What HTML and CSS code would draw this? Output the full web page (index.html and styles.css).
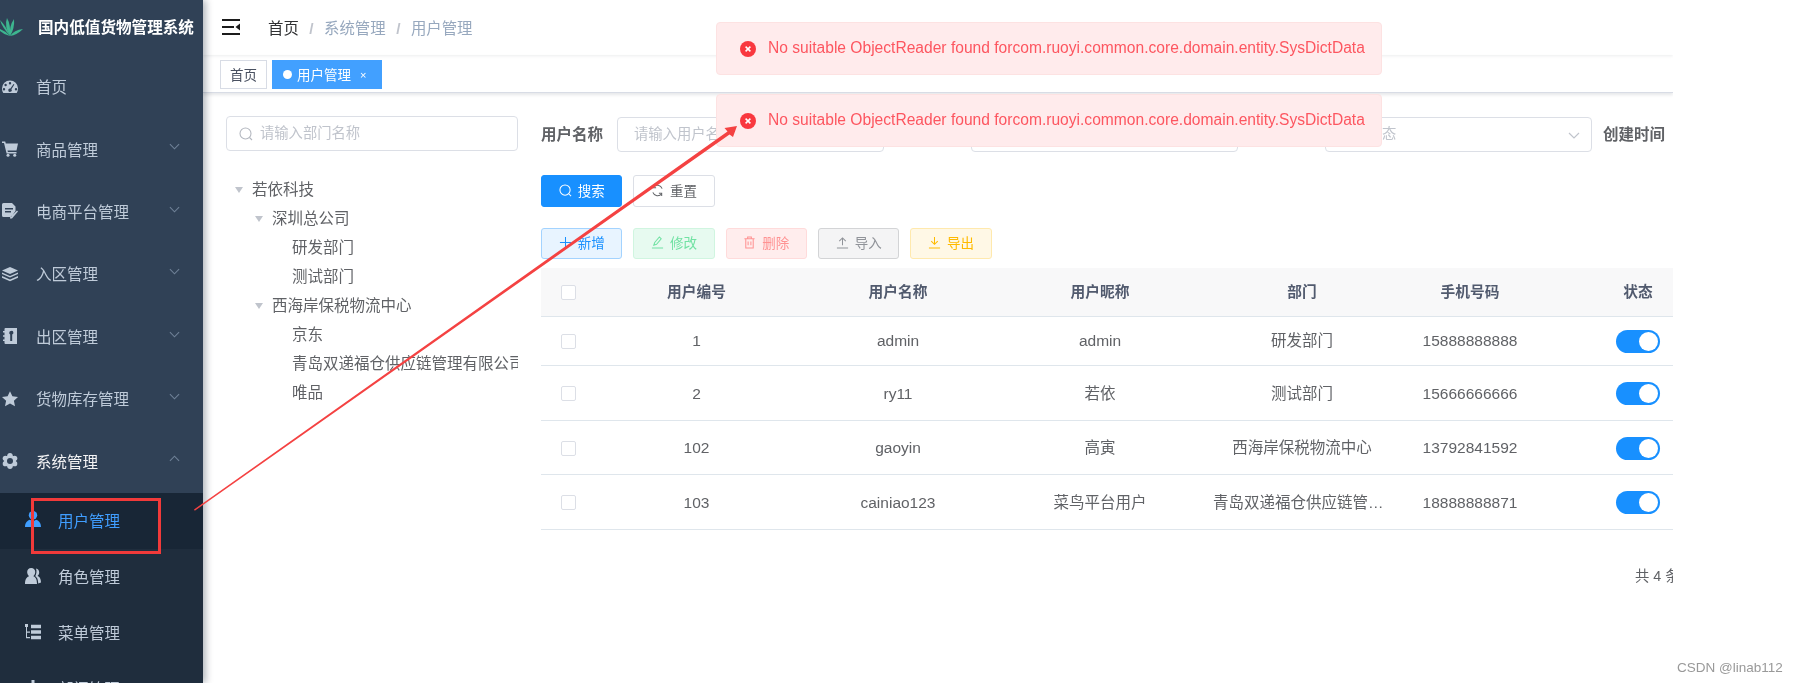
FILE: index.html
```html
<!DOCTYPE html>
<html lang="zh-CN">
<head>
<meta charset="utf-8">
<title>用户管理</title>
<link rel="stylesheet" href="styles.css">
</head>
<body>
<div class="app">
  <aside class="sidebar">
    <div class="logo">
      <svg class="logo-mark" viewBox="0 0 23 18"><path d="M10 18Q2 9 0 2 6 8 10 18z"/><path d="M10 18Q4 8 7 0 11 7 10 18z"/><path d="M10 18Q9 8 14 1 15 10 10 18z"/><path d="M10 18Q14 12 23 11 17 17 10 18z"/><path d="M10 18Q3 17-3 10 5 12 10 18z"/></svg>
      <span class="logo-title">国内低值货物管理系统</span>
    </div>
    <nav class="menu">
      <div class="menu-item">
        <svg class="ico" viewBox="0 0 16 16"><path fill-rule="evenodd" d="M8 1.500A8 8 0 0 0 0 9.500c0 1.700.5 3.200 1.300 4.500h13.400A8 8 0 0 0 16 9.500a8 8 0 0 0-8-8zM8 3a1.200 1.200 0 1 1 0 2.400A1.200 1.200 0 0 1 8 3zM3.600 4.800a1.200 1.200 0 1 1 0 2.400 1.200 1.200 0 0 1 0-2.400zM2 9a1.200 1.200 0 1 1 0 2.400A1.200 1.200 0 0 1 2 9zm12 0a1.200 1.200 0 1 1 0 2.400A1.200 1.200 0 0 1 14 9zM11.500 5l.9.5L9.400 10.200a1.700 1.700 0 1 1-1-.7z"/></svg>
        <span class="menu-label">首页</span>
      </div>
      <div class="menu-item">
        <svg class="ico" viewBox="0 0 16 16"><path d="M0 .5h3.200l.6 2H16l-1.500 7H5.500l.4 1.500h8.600v1.500H4.600L2 2H0z"/><circle cx="6" cy="14.300" r="1.500"/><circle cx="12.700" cy="14.300" r="1.500"/></svg>
        <span class="menu-label">商品管理</span>
        <svg class="chev" viewBox="0 0 12 7"><path d="M1 1l5 5 5-5"/></svg>
      </div>
      <div class="menu-item">
        <svg class="ico" viewBox="0 0 16 16"><path fill-rule="evenodd" d="M1.500 0H10l3.500 3.500V8L9 14H1.500A1.500 1.500 0 0 1 0 12.500v-11A1.500 1.500 0 0 1 1.500 0zM3 5v1.400h8V5zm0 3v1.400h6V8zm5 6.500L15 7.500l1 1-6 7H8z"/></svg>
        <span class="menu-label">电商平台管理</span>
        <svg class="chev" viewBox="0 0 12 7"><path d="M1 1l5 5 5-5"/></svg>
      </div>
      <div class="menu-item">
        <svg class="ico" viewBox="0 0 16 16"><path d="M8 1l8 3.500L8 8 0 4.500z"/><path d="M0 6.500L8 10l8-3.500V8l-8 3.500L0 8z"/><path d="M0 10l8 3.500 8-3.500v1.700L8 15.200 0 11.700z"/></svg>
        <span class="menu-label">入区管理</span>
        <svg class="chev" viewBox="0 0 12 7"><path d="M1 1l5 5 5-5"/></svg>
      </div>
      <div class="menu-item">
        <svg class="ico" viewBox="0 0 16 16"><path fill-rule="evenodd" d="M3.500 0H15v16H3.500a1 1 0 0 1-1-1v-2H1v-1.500h1.500V8.700H1V7.300h1.500V4.500H1V3h1.500V1a1 1 0 0 1 1-1zM9 3a1.800 1.800 0 0 0-.8 3.400V13h2V6.400A1.800 1.800 0 0 0 9 3z"/></svg>
        <span class="menu-label">出区管理</span>
        <svg class="chev" viewBox="0 0 12 7"><path d="M1 1l5 5 5-5"/></svg>
      </div>
      <div class="menu-item">
        <svg class="ico" viewBox="0 0 16 16"><path d="M8 .300l2.400 5 5.600.7-4.100 3.800 1.100 5.500L8 12.600l-5 2.700 1.100-5.500L0 6l5.600-.7z"/></svg>
        <span class="menu-label">货物库存管理</span>
        <svg class="chev" viewBox="0 0 12 7"><path d="M1 1l5 5 5-5"/></svg>
      </div>
      <div class="menu-item is-open">
        <svg class="ico" viewBox="0 0 16 16"><circle cx="8" cy="8" r="6"/><circle cx="8" cy="2.700" r="2.700"/><circle cx="8" cy="13.300" r="2.700"/><circle cx="3.400" cy="5.350" r="2.700"/><circle cx="12.600" cy="5.350" r="2.700"/><circle cx="3.400" cy="10.650" r="2.700"/><circle cx="12.600" cy="10.650" r="2.700"/><circle class="gear-ring" cx="8" cy="8" r="3"/></svg>
        <span class="menu-label">系统管理</span>
        <svg class="chev" viewBox="0 0 12 7"><path d="M1 6l5-5 5 5"/></svg>
      </div>
      <div class="submenu">
        <div class="sub-item is-active">
          <svg class="ico" viewBox="0 0 16 16"><circle cx="8" cy="4.300" r="4.200"/><path d="M0 16c0-4.500 2.500-6.500 5-7.200l3 1.700 3-1.700c2.500.7 5 2.700 5 7.200z"/></svg>
          <span>用户管理</span>
        </div>
        <div class="sub-item">
          <svg class="ico" viewBox="0 0 16 16"><path d="M6.200 0a4 4 0 0 1 4 4.500c-.2 1.800-1 3-1.900 3.700 2.200.7 3.700 2.500 3.700 7.800H0c0-5.300 1.900-7.100 4.100-7.800C3.200 7.500 2.400 6.300 2.200 4.500A4 4 0 0 1 6.200 0z"/><path d="M11 .5c2 .3 3.200 1.900 3.200 3.700 0 1.700-.7 3-1.700 3.700 2 .8 3.500 2.500 3.500 6.600l-2.800 1c0-5-1.700-6.400-3-7.300 1.200-1.700 1.800-5.300.8-7.700z"/></svg>
          <span>角色管理</span>
        </div>
        <div class="sub-item">
          <svg class="ico" viewBox="0 0 16 16"><path d="M0 0h3v3H2v4.500h3v1.300H2V13h3v1.300H1V3H0z"/><path d="M6 .800h10v3.400H6zM6 6.300h10v3.400H6zM6 11.800h10v3.400H6z"/></svg>
          <span>菜单管理</span>
        </div>
        <div class="sub-item">
          <svg class="ico" viewBox="0 0 16 16"><path d="M6.500 0h3v4h-3zM2 7h12v3H2z"/></svg>
          <span>部门管理</span>
        </div>
      </div>
    </nav>
  </aside>

  <main class="main">
    <header class="navbar">
      <svg class="hamburger" viewBox="0 0 18 16"><path d="M0 0h18v2H0zM0 7h12v2H0zM0 14h18v2H0zM18 4.500v7L13.500 8z"/></svg>
      <div class="crumbs">
        <span class="crumb-home">首页</span><span class="crumb-sep">/</span><span>系统管理</span><span class="crumb-sep">/</span><span>用户管理</span>
      </div>
    </header>
    <div class="tags">
      <span class="tag"><span class="tag-text">首页</span></span>
      <span class="tag tag-active"><i class="tag-dot"></i><span class="tag-text">用户管理</span><b class="tag-x">×</b></span>
    </div>

    <div class="content">
      <section class="tree-col">
        <div class="field tree-search">
          <svg class="search-ico" viewBox="0 0 14 14"><circle cx="6.500" cy="6.500" r="5.500"/><path d="M10.500 10.500L13 13"/></svg>
          <span class="ph">请输入部门名称</span>
        </div>
        <div class="tree">
          <div class="node"><i class="caret"></i>若依科技</div>
          <div class="node lv1"><i class="caret"></i>深圳总公司</div>
          <div class="node lv2">研发部门</div>
          <div class="node lv2">测试部门</div>
          <div class="node lv1"><i class="caret"></i>西海岸保税物流中心</div>
          <div class="node lv2">京东</div>
          <div class="node lv2">青岛双递福仓供应链管理有限公司</div>
          <div class="node lv2">唯品</div>
        </div>
      </section>

      <section class="data-col">
        <form class="query">
          <label class="q-label">用户名称</label>
          <div class="field q-input"><span class="ph">请输入用户名称</span></div>
          <label class="q-label">手机号码</label>
          <div class="field q-input"><span class="ph">请输入手机号码</span></div>
          <label class="q-label">状态</label>
          <div class="field q-input q-select"><span class="ph">用户状态</span>
            <svg class="select-chev" viewBox="0 0 12 7"><path d="M1 1l5 5 5-5"/></svg>
          </div>
          <label class="q-label q-last">创建时间</label>
        </form>

        <div class="btn-row">
          <span class="btn btn-primary"><svg class="b-ico" viewBox="0 0 14 14"><circle cx="6.500" cy="6.500" r="5.500"/><path d="M10.500 10.500L13 13"/></svg>搜索</span>
          <span class="btn btn-plain"><svg class="b-ico" viewBox="0 0 14 14"><path d="M12 5A5.500 5.500 0 0 0 2.500 3.500M2 9a5.500 5.500 0 0 0 9.500 1.500"/><path d="M2.500 1v3h3M11.500 13v-3h-3"/></svg>重置</span>
        </div>

        <div class="btn-row tools">
          <span class="btn t-blue"><svg class="b-ico" viewBox="0 0 14 14"><path d="M7 1v12M1 7h12"/></svg>新增</span>
          <span class="btn t-green"><svg class="b-ico" viewBox="0 0 14 14"><path d="M1 13h12M3 10l1-3 5-6 2 2-5 6z"/></svg>修改</span>
          <span class="btn t-red"><svg class="b-ico" viewBox="0 0 14 14"><path d="M1.500 3h11M3 3v10h8V3M5 3V1h4v2M5.500 6v4M8.500 6v4"/></svg>删除</span>
          <span class="btn t-gray"><svg class="b-ico" viewBox="0 0 14 14"><path d="M1 13h12M7 10V2M3.500 5.500L7 2l3.500 3.500"/></svg>导入</span>
          <span class="btn t-yellow"><svg class="b-ico" viewBox="0 0 14 14"><path d="M1 13h12M7 1v8M3.500 5.500L7 9l3.500-3.500"/></svg>导出</span>
        </div>

        <div class="table">
          <div class="tr th">
            <span class="cell"><i class="check"></i></span><span class="cell">用户编号</span><span class="cell">用户名称</span><span class="cell">用户昵称</span><span class="cell">部门</span><span class="cell">手机号码</span><span class="cell">状态</span>
          </div>
          <div class="tr r-short">
            <span class="cell"><i class="check"></i></span><span class="cell">1</span><span class="cell">admin</span><span class="cell">admin</span><span class="cell">研发部门</span><span class="cell">15888888888</span><span class="cell"><i class="switch"></i></span>
          </div>
          <div class="tr r-tall">
            <span class="cell"><i class="check"></i></span><span class="cell">2</span><span class="cell">ry11</span><span class="cell">若依</span><span class="cell">测试部门</span><span class="cell">15666666666</span><span class="cell"><i class="switch"></i></span>
          </div>
          <div class="tr r-tall">
            <span class="cell"><i class="check"></i></span><span class="cell">102</span><span class="cell">gaoyin</span><span class="cell">高寅</span><span class="cell">西海岸保税物流中心</span><span class="cell">13792841592</span><span class="cell"><i class="switch"></i></span>
          </div>
          <div class="tr r-tall">
            <span class="cell"><i class="check"></i></span><span class="cell">103</span><span class="cell">cainiao123</span><span class="cell">菜鸟平台用户</span><span class="cell">青岛双递福仓供应链管理有限公司</span><span class="cell">18888888871</span><span class="cell"><i class="switch"></i></span>
          </div>
        </div>
        <div class="pager">共 4 条</div>
      </section>
    </div>
  </main>
</div>

<div class="msg msg-one">
  <svg class="msg-ico" viewBox="0 0 16 16"><circle cx="8" cy="8" r="8"/><path d="M5.600 5.600l4.800 4.800M10.400 5.600l-4.800 4.800"/></svg>
  <span class="msg-text">No suitable ObjectReader found forcom.ruoyi.common.core.domain.entity.SysDictData</span>
</div>
<div class="msg msg-two">
  <svg class="msg-ico" viewBox="0 0 16 16"><circle cx="8" cy="8" r="8"/><path d="M5.600 5.600l4.800 4.800M10.400 5.600l-4.800 4.800"/></svg>
  <span class="msg-text">No suitable ObjectReader found forcom.ruoyi.common.core.domain.entity.SysDictData</span>
</div>

<svg class="annot" viewBox="0 0 1797 683">
  <path class="annot-arrow" d="M194 509.500L194.800 510.700 729.500 134.500 733 137 737 126 724.500 128 727.500 131.500z"/>
</svg>
<div class="annot-box"></div>
<div class="watermark">CSDN @linab112</div>
</body>
</html>
```

FILE: styles.css
```css
* { box-sizing: border-box; }
html, body { margin: 0; height: 683px; overflow: hidden; background: #fff; }
body {
  font-family: "Liberation Sans", "Noto Sans CJK SC", sans-serif;
  font-size: 15.5px;
  color: #606266;
  filter: blur(.4px);
}
.app { display: flex; width: 1673px; height: 683px; }

/* sidebar */
.sidebar {
  width: 203px;
  flex: none;
  height: 683px;
  overflow: hidden;
  background: #304156;
  color: #bfcbd9;
  box-shadow: 3px 0 7px rgba(0, 21, 41, .3);
  position: relative;
  z-index: 2;
}
.logo { height: 56px; display: flex; align-items: center; padding-bottom: 3px; }
.logo-mark { width: 23px; height: 18px; margin-right: 15px; fill: #3db58f; flex: none; overflow: visible; }
.logo-title { color: #fff; font-weight: 700; font-size: 15.6px; white-space: nowrap; margin-top: -1px; }
.menu-item {
  height: 62.4px;
  display: flex;
  align-items: center;
  padding-left: 2px;
  position: relative;
}
.ico { width: 16px; height: 16px; fill: #bfcbd9; flex: none; margin-top: -1px; }
.gear-ring { fill: #304156; }
.menu-label { margin: -2px 0 0 18px; }
.chev {
  position: absolute;
  left: 169px;
  top: 25px;
  width: 11px;
  height: 7px;
  fill: none;
  stroke: #6f8197;
  stroke-width: 1.200;
}
.is-open { color: #f4f4f5; }
.submenu { background: #1f2d3d; }
.sub-item {
  height: 56.2px;
  display: flex;
  align-items: center;
  gap: 17px;
  padding-left: 25px;
  padding-bottom: 2px;
}
.is-active { background: #182636; color: #409eff; }
.is-active .ico { fill: #409eff; }

/* main */
.main { width: 1470px; flex: none; overflow: hidden; }
.navbar {
  height: 55px;
  display: flex;
  align-items: center;
  padding-left: 19px;
  box-shadow: 0 1px 3px rgba(0, 21, 41, .08);
  position: relative;
}
.hamburger { width: 18px; height: 16px; fill: #1c1c1c; margin-top: -1px; }
.crumbs { margin: -2px 0 0 28px; color: #97a8be; font-size: 15.4px; white-space: nowrap; }
.crumb-home { color: #303133; }
.crumb-sep { color: #c0c4cc; margin: 0 10.5px; font-weight: 700; }
.tags {
  height: 38px;
  padding: 5px 0 0 17px;
  display: flex;
  gap: 5px;
  border-bottom: 1px solid #d8dce5;
  box-shadow: 0 2px 3px rgba(0, 21, 41, .1);
}
.tag {
  height: 29px;
  width: 47px;
  display: flex;
  align-items: center;
  justify-content: center;
  border: 1px solid #d8dce5;
  font-size: 13.5px;
  color: #495060;
}
.tag-text { margin-top: -2px; }
.tag-active {
  width: 110px;
  justify-content: flex-start;
  padding-left: 10px;
  background: #42a0ff;
  border-color: #42a0ff;
  color: #fff;
}
.tag-dot { width: 9px; height: 9px; border-radius: 50%; background: #fff; margin-right: 5px; }
.tag-x { font-weight: 400; font-size: 11px; margin-left: 9px; }

.content { display: flex; gap: 23px; padding: 23px 0 0 23px; }
.tree-col { width: 292px; flex: none; overflow: hidden; }
.field {
  height: 35px;
  display: flex;
  align-items: center;
  border: 1px solid #dcdfe6;
  border-radius: 4px;
  background: #fff;
  white-space: nowrap;
  overflow: hidden;
}
.ph { color: #c0c4cc; font-size: 14.3px; margin-top: -4px; }
.tree-search { padding-left: 12px; }
.search-ico { width: 14px; height: 14px; margin-right: 7px; fill: none; stroke: #b4b8c0; stroke-width: 1.100; }
.tree { margin-top: 24px; }
.node { height: 29px; line-height: 28px; white-space: nowrap; padding-left: 9px; display: flex; align-items: center; }
.lv1 { padding-left: 29px; }
.lv2 { padding-left: 66px; }
.caret {
  width: 0; height: 0;
  margin-right: 9px;
  border-left: 4.5px solid transparent;
  border-right: 4.5px solid transparent;
  border-top: 6px solid #c0c4cc;
}

.data-col { width: 1132px; flex: none; overflow: hidden; }
.query { display: flex; align-items: center; margin-top: 1px; }
.q-label { width: 76px; flex: none; font-weight: 700; font-size: 15.5px; white-space: nowrap; margin-top: -4px; }
.q-input { width: 266.5px; margin-right: 11.5px; flex: none; padding-left: 16px; position: relative; }
.q-select { padding-left: 13px; }
.q-last { width: 64px; }
.select-chev { position: absolute; right: 11px; top: 14px; width: 12px; height: 7px; fill: none; stroke: #c0c4cc; stroke-width: 1.200; }

.btn-row { display: flex; gap: 11px; margin-top: 23px; }
.tools { margin-top: 21px; }
.btn {
  width: 81.35px;
  height: 32px;
  display: flex;
  align-items: center;
  justify-content: center;
  gap: 6px;
  padding-bottom: 2px;
  border: 1px solid #dcdfe6;
  border-radius: 3px;
  font-size: 13.5px;
  white-space: nowrap;
}
.tools .btn { height: 31px; padding-bottom: 3px; }
.b-ico { width: 13px; height: 13px; fill: none; stroke: currentColor; stroke-width: 1.100; }
.btn-primary { background: #1890ff; border-color: #1890ff; color: #fff; }
.btn-plain { color: #606266; }
.t-blue { background: #e8f4ff; border-color: #a3d3ff; color: #1890ff; }
.t-green { background: #e7faf0; border-color: #d0f5e0; color: #71e2a3; }
.t-red { background: #ffeded; border-color: #ffdbdb; color: #ff9292; }
.t-gray { background: #f4f4f5; border-color: #d3d4d6; color: #909399; }
.t-yellow { background: #fff8e6; border-color: #ffe9ad; color: #ffba00; }

.table { margin-top: 9px; width: 1132px; overflow: hidden; }
.tr {
  display: grid;
  grid-template-columns: 55px 201px 202px 202px 202px 134px 202px;
  width: 1198px;
  align-items: center;
  border-bottom: 1px solid #dfe6ec;
  text-align: center;
}
.th { height: 49px; background: #f8f8f9; color: #515a6e; font-weight: 700; font-size: 14.7px; }
.r-short { height: 49px; }
.r-tall { height: 54.5px; padding-top: 2px; }
.cell {
  display: block;
  padding: 0 12px;
  white-space: nowrap;
  overflow: hidden;
  text-overflow: ellipsis;
  line-height: 24px;
}
.check {
  display: block;
  width: 15px;
  height: 15px;
  margin: 0 auto 0 8px;
  border: 1px solid #dcdfe6;
  border-radius: 2px;
  background: #fff;
}
.switch {
  display: block;
  position: relative;
  width: 44px;
  height: 23px;
  margin: 0 auto;
  border-radius: 12px;
  background: #1890ff;
}
.switch::after {
  content: "";
  position: absolute;
  right: 2px;
  top: 2px;
  width: 19px;
  height: 19px;
  border-radius: 50%;
  background: #fff;
}
.pager { margin: 35px 0 0 1094px; line-height: 22px; font-size: 14.3px; white-space: nowrap; }

/* overlays */
.msg {
  position: absolute;
  left: 716px;
  width: 666px;
  height: 53px;
  display: flex;
  align-items: center;
  gap: 12px;
  padding-left: 23px;
  background: #ffebec;
  border: 1px solid #fde2e2;
  border-radius: 4px;
  color: #fd5660;
  font-size: 15.6px;
  white-space: nowrap;
  z-index: 5;
}
.msg-text { margin-top: -1px; }
.msg-one { top: 22px; }
.msg-two { top: 94px; }
.msg-ico { width: 16px; height: 16px; flex: none; fill: #f9383f; stroke: #fff; stroke-width: 1.500; }
.msg-ico circle { stroke: none; }
.annot { position: absolute; left: 0; top: 0; width: 1797px; height: 683px; z-index: 6; pointer-events: none; }
.annot-arrow { fill: #f44242; }
.annot-box {
  position: absolute;
  left: 31px;
  top: 498px;
  width: 130px;
  height: 56px;
  border: 3px solid #f13a3a;
  z-index: 6;
}
.watermark {
  position: absolute;
  left: 1677px;
  top: 660px;
  font-size: 13.5px;
  line-height: 16px;
  color: #999;
  white-space: nowrap;
}
```
